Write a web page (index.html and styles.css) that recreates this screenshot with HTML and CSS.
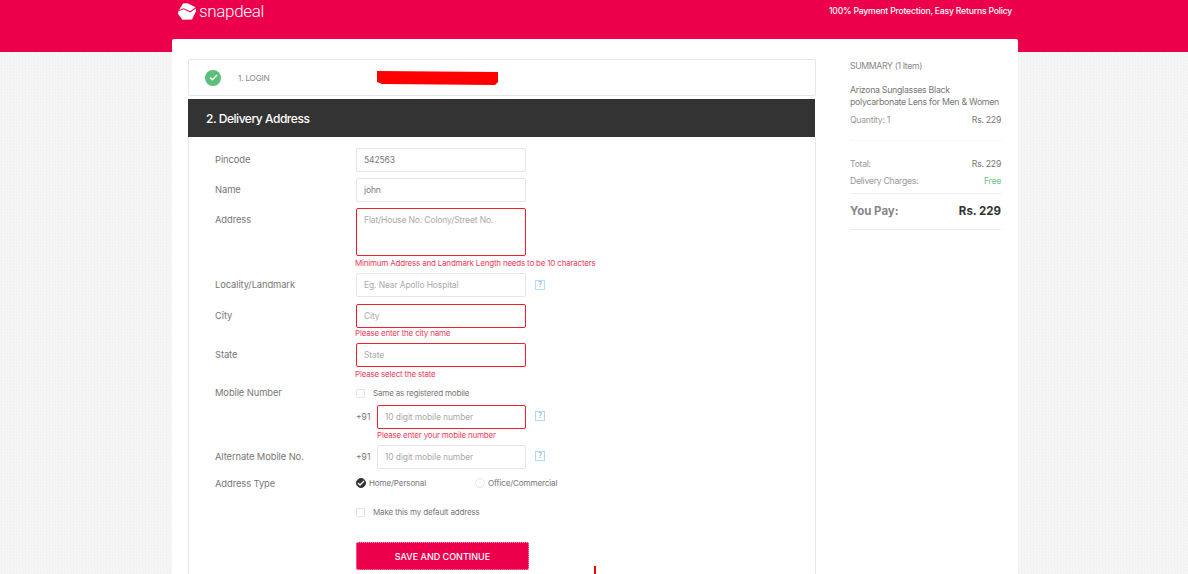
FILE: index.html
```html
<!DOCTYPE html>
<html lang="en">
<head>
<meta charset="utf-8">
<title>Snapdeal Checkout</title>
<link rel="stylesheet" href="styles.css">
</head>
<body>
<header class="topbar">
  <div class="topbar-inner">
    <div class="logo">
      <svg class="logo-icon" width="18" height="17" viewBox="0 0 18 17"><path fill="#fff" d="M5 .4 9.5.2 17.6 4.2 12.2 8.2 5.6 5.2 1 7Z"/><path fill="#fff" d="M.2 8.2 5.6 6.3 12.2 9.4 17.8 5.4 18 8.2 14 16.6 4.4 16.8.1 11Z"/></svg>
      <span class="logo-text">snapdeal</span>
    </div>
    <div class="promise">100% Payment Protection, Easy Returns Policy</div>
  </div>
</header>
<main class="card">
  <section class="checkout">
    <div class="login-row">
      <span class="check"><svg width="9" height="7" viewBox="0 0 9 7"><path d="M1 3.6 3.3 5.8 8 1" fill="none" stroke="#fff" stroke-width="1.4"/></svg></span>
      <span class="login-label">1. LOGIN</span>
    </div>
    <h2 class="step-title">2. Delivery Address</h2>
    <form class="form">
      <div class="row row-pin"><label class="lbl">Pincode</label><div class="field"><div class="input">542563</div></div></div>
      <div class="row"><label class="lbl">Name</label><div class="field"><div class="input">john</div></div></div>
      <div class="row"><label class="lbl lbl-addr">Address</label><div class="field"><div class="input textarea bad ph">Flat/House No. Colony/Street No.</div><div class="err err-wide">Minimum Address and Landmark Length needs to be 10 characters</div></div></div>
      <div class="row row-loc"><label class="lbl">Locality/Landmark</label><div class="field"><div class="input ph">Eg. Near Apollo Hospital</div></div><span class="help">?</span></div>
      <div class="row row-city"><label class="lbl">City</label><div class="field"><div class="input bad ph">City</div><div class="err err-city">Please enter the city name</div></div></div>
      <div class="row row-state"><label class="lbl">State</label><div class="field"><div class="input bad ph">State</div><div class="err err-state">Please select the state</div></div></div>
      <div class="row row-mob"><label class="lbl">Mobile Number</label>
        <div class="field">
          <div class="opt"><span class="box"></span>Same as registered mobile</div>
          <div class="phone"><span class="cc">+91</span><div class="input short bad ph">10 digit mobile number</div><span class="help">?</span></div>
          <div class="err err-phone">Please enter your mobile number</div>
        </div>
      </div>
      <div class="row row-alt"><label class="lbl">Alternate Mobile No.</label><div class="field"><div class="phone"><span class="cc">+91</span><div class="input short ph">10 digit mobile number</div><span class="help">?</span></div></div></div>
      <div class="row row-type"><label class="lbl">Address Type</label>
        <div class="types">
          <span class="type type-home"><span class="radio on"><svg width="8" height="6" viewBox="0 0 8 6"><path d="M1 3 3 5 7 1" fill="none" stroke="#fff" stroke-width="1.3"/></svg></span>Home/Personal</span>
          <span class="type"><span class="radio"></span>Office/Commercial</span>
        </div>
      </div>
      <div class="row row-def"><div class="spacer"></div><div class="opt"><span class="box"></span>Make this my default address</div></div>
      <div class="row row-btn"><div class="spacer"></div><button type="button" class="save">SAVE AND CONTINUE</button></div>
    </form>
  </section>
  <aside class="summary">
    <div class="sum-title">SUMMARY (1 Item)</div>
    <div class="sum-name">Arizona Sunglasses Black<br>polycarbonate Lens for Men &amp; Women</div>
    <div class="sum-line sum-qty"><span>Quantity: 1</span><span class="dark">Rs. 229</span></div>
    <div class="sum-line sum-total"><span>Total:</span><span class="dark">Rs. 229</span></div>
    <div class="sum-line sum-del"><span>Delivery Charges:</span><span class="free">Free</span></div>
    <div class="sum-pay"><span>You Pay:</span><span class="pay-val">Rs. 229</span></div>
  </aside>
</main>
<svg class="scribble" width="124" height="17" viewBox="0 0 124 17"><path fill="#fe0000" d="M1 1 122 2 122 12 119 15 6 14 1 12Z"/></svg>
<span class="tick"></span>
</body>
</html>
```
FILE: styles.css
```css
* { box-sizing: border-box; }
html, body { margin: 0; height: 574px; overflow: hidden; }
body { position: relative; background: repeating-conic-gradient(#f2f2f2 0 25%, #f7f7f7 0 50%) 0 0 / 3px 3px; font-family: Inter, "Liberation Sans", sans-serif; font-size: 9px; color: #777; }
.topbar { height: 52px; background: #ec004b; }
.topbar-inner { width: 846px; margin-left: 172px; display: flex; justify-content: space-between; padding: 0 6px; color: #fff; }
.logo { display: flex; align-items: flex-start; gap: 3px; padding-top: 3px; }
.logo-icon { display: block; }
.logo-text { font: 300 17px/18px Roboto, sans-serif; letter-spacing: -.32px; margin-top: -1px; }
.promise { font-size: 8.6px; font-weight: 500; line-height: 11px; padding-top: 6px; letter-spacing: -.19px; }
.card { width: 846px; height: 535px; margin: -13px 0 0 172px; background: #fff; border-radius: 2px 2px 0 0; padding: 20px 0 0 16px; display: flex; }
.checkout { width: 628px; flex: none; }
.login-row { height: 37px; border: 1px solid #e6e6e6; border-radius: 2px; display: flex; align-items: center; padding-left: 16px; }
.check { width: 16px; height: 16px; border-radius: 50%; background: #5ac079; display: flex; align-items: center; justify-content: center; }
.login-label { margin-left: 17px; font-size: 8.2px; letter-spacing: -.2px; color: #888; }
.step-title { margin: 3px 1px 0 0; height: 38px; background: #333; color: #fff; font-size: 12px; font-weight: 500; letter-spacing: -.46px; line-height: 39px; padding-left: 18px; }
.form { height: 437px; border: 1px solid #e6e6e6; border-width: 0 1px; padding: 11px 0 0 26px; }
.row { display: flex; align-items: flex-start; margin-top: 6px; }
.row-pin { margin-top: 0; }
.lbl { width: 141px; flex: none; font-size: 9.4px; letter-spacing: -.1px; line-height: 23px; color: #777; }
.lbl-addr { line-height: 24px; }
.field { width: 190px; }
.input { width: 170px; height: 24px; border: 1px solid #e6e6e6; border-radius: 2px; padding: 0 7px; font-size: 8.5px; letter-spacing: -.13px; line-height: 22px; color: #777; }
.input.ph { color: #aaa; }
.input.bad { border-color: #f41d2d; }
.textarea { height: 48px; line-height: 22px; }
.short { width: 149px; }
.err { font-size: 8px; letter-spacing: -.2px; line-height: 11px; color: #ef3b5a; margin-left: -1px; margin-top: 1px; white-space: nowrap; }
.err-wide { margin-top: 2px; }
.err-city { margin-top: 0; }
.err-state { margin-top: 2px; }
.row-loc { margin-top: 4px; }
.row-city { margin-top: 7px; }
.row-state { margin-top: 4px; }
.help { width: 10px; height: 10px; margin: 7px 0 0 9px; border: 1px solid #b5dcf7; font-size: 7px; line-height: 8px; text-align: center; color: #5aa8dc; flex: none; }
.row-loc .help { margin-left: -11px; }
.opt { display: flex; align-items: center; font-size: 8px; letter-spacing: -.16px; line-height: 9px; color: #777; }
.box { width: 9px; height: 9px; border: 1px solid #e6e6e6; border-radius: 1px; margin-right: 8px; flex: none; }
.row-mob { margin-top: 4px; }
.row-mob .lbl { line-height: 17px; }
.row-mob .opt { height: 9px; margin-top: 5px; }
.phone { display: flex; align-items: flex-start; margin-top: 7px; }
.cc { width: 21px; flex: none; font-size: 8.5px; line-height: 24px; color: #777; }
.phone .help { margin: 6px 0 0 9px; }
.err-phone { margin: 1px 0 0 21px; }
.row-alt { margin-top: 4px; }
.row-alt .phone { margin-top: 0; }
.row-type { margin-top: 4px; }
.row-type .lbl { line-height: 22px; }
.types { display: flex; padding-top: 5px; }
.type { display: flex; align-items: center; font-size: 8.1px; letter-spacing: -.15px; line-height: 10px; color: #777; }
.type-home { width: 119px; }
.radio { width: 10px; height: 10px; border: 1px solid #e6e6e6; border-radius: 50%; margin-right: 3px; display: flex; align-items: center; justify-content: center; flex: none; }
.radio.on { background: #333; border-color: #333; }
.spacer { width: 141px; flex: none; }
.row-def { margin-top: 13px; }
.row-btn { margin-top: 25px; }
.save { width: 173px; height: 28px; background: #ec004b; border: 1px dotted #ff9db8; border-radius: 2px; color: #fff; font: 500 9px Inter, sans-serif; padding: 0; }
.summary { width: 151px; margin-left: 34px; padding-top: 1px; color: #777; }
.sum-title { font-size: 8.7px; letter-spacing: -.35px; line-height: 12px; color: #888; }
.sum-name { margin-top: 12px; font-size: 8.8px; letter-spacing: -.3px; line-height: 12px; color: #777; white-space: nowrap; }
.sum-line { display: flex; justify-content: space-between; font-size: 8.7px; letter-spacing: -.28px; line-height: 12px; color: #999; }
.dark { color: #777; }
.free { color: #6cc487; }
.sum-qty { margin-top: 6px; padding-bottom: 12px; border-bottom: 1px dotted #eee; height: 27px; }
.sum-total { margin-top: 17px; }
.sum-del { margin-top: 5px; padding-bottom: 6px; border-bottom: 1px solid #eee; height: 19px; }
.sum-pay { display: flex; justify-content: space-between; align-items: center; height: 36px; padding-bottom: 2px; border-bottom: 1px solid #eee; font-size: 11.5px; font-weight: 700; color: #888; }
.pay-val { color: #333; }
.scribble { position: absolute; left: 376px; top: 70px; }
.tick { position: absolute; left: 594px; top: 566px; width: 2px; height: 8px; background: #f00; }
```
